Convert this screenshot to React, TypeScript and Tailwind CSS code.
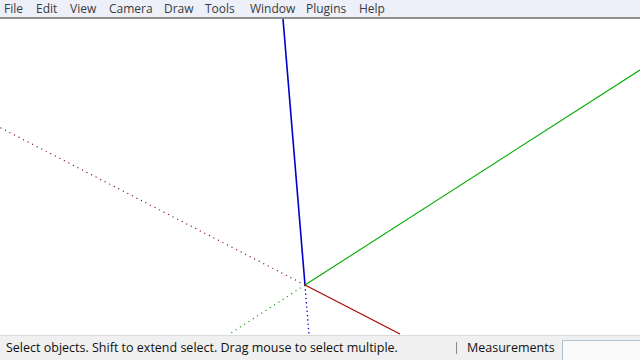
import React from "react";

const menus = [
  { label: "File", w: "w-[32px]" },
  { label: "Edit", w: "w-[34px]" },
  { label: "View", w: "w-[39px]" },
  { label: "Camera", w: "w-[55px]" },
  { label: "Draw", w: "w-[41px]" },
  { label: "Tools", w: "w-[45px]" },
  { label: "Window", w: "w-[56px]" },
  { label: "Plugins", w: "w-[53px]" },
  { label: "Help", w: "w-[40px]" },
];

// origin of the axes in page coords
const O = { x: 305, y: 285 };

function Axes() {
  return (
    <svg width="640" height="316" viewBox="0 19 640 316" className="block">
      {/* blue */}
      <line x1={O.x} y1={O.y} x2={283} y2={19} stroke="#0000cc" strokeWidth="1.6" />
      <line x1={O.x} y1={O.y} x2={309} y2={335} stroke="#0000cc" strokeWidth="1.3" strokeDasharray="1.3 3" />
      {/* green */}
      <line x1={O.x} y1={O.y} x2={640} y2={70} stroke="#00aa00" strokeWidth="1.1" />
      <line x1={O.x} y1={O.y} x2={228} y2={335} stroke="#008800" strokeWidth="1.1" strokeDasharray="1.1 4" />
      {/* red */}
      <line x1={O.x} y1={O.y} x2={400} y2={334} stroke="#aa0000" strokeWidth="1.1" />
      <line x1={O.x} y1={O.y} x2={0} y2={127.5} stroke="#7a0000" strokeWidth="1.1" strokeDasharray="1.1 4" />
    </svg>
  );
}

export default function App() {
  return (
    <div className="w-[640px] h-[360px] flex flex-col overflow-hidden bg-white font-['Open_Sans',sans-serif]">
      {/* menu bar */}
      <div className="h-[19px] shrink-0 flex items-center pl-[4px] bg-[#edf0f8] border-b-2 border-[#8e8e8e] text-[12px] leading-none text-[#3a3a3a]">
        {menus.map((m) => (
          <span key={m.label} className={`${m.w} shrink-0`}>
            {m.label}
          </span>
        ))}
      </div>

      {/* drawing area */}
      <div className="flex-1 bg-white">
        <Axes />
      </div>

      {/* status bar */}
      <div className="h-[25px] shrink-0 flex items-center bg-[#f0f0f0] border-t border-[#dadada] text-[12.5px] text-[#111]">
        <span className="pl-[6px] w-[456px] shrink-0 whitespace-nowrap">
          Select objects. Shift to extend select. Drag mouse to select multiple.
        </span>
        <span className="w-px h-[12px] bg-[#8a8a8a] shrink-0" />
        <span className="pl-[10px] w-[105px] shrink-0">Measurements</span>
        <div className="flex-1 self-end h-[20px] border border-[#b3c2d1] border-r-0 border-b-0 bg-[#fafafa]" />
      </div>
    </div>
  );
}
